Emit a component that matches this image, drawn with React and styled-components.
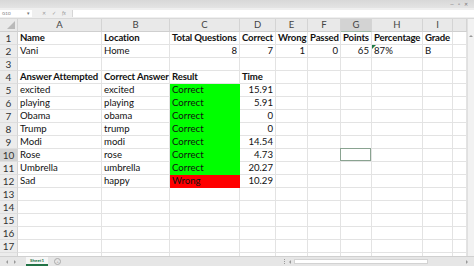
import React from "react";
import styled, { createGlobalStyle } from "styled-components";

const Global = createGlobalStyle`
  html, body { margin: 0; padding: 0; background: #fff; }
  body { font-family: Lato, "Open Sans", sans-serif; overflow: hidden; }
  #root { width: 474px; height: 266px; }
`;

const Window = styled.div`
  width: 474px;
  height: 266px;
  display: flex;
  flex-direction: column;
  overflow: hidden;
  background: #fff;
`;

const TitleBar = styled.div`
  height: 8px;
  background: linear-gradient(#d8d8d8, #e4e4e4);
  display: flex;
  justify-content: flex-end;
  align-items: center;
  gap: 4px;
  padding-right: 6px;
  font-size: 5px;
  color: #777;
  line-height: 8px;
`;

const FormulaBar = styled.div`
  height: 10px;
  background: #efefef;
  display: flex;
  align-items: center;
  padding-top: 1px;
  box-sizing: border-box;
`;

const NameBox = styled.div`
  width: 32px;
  height: 7px;
  background: #fff;
  font-size: 4.5px;
  line-height: 7px;
  color: #777;
  display: flex;
  justify-content: space-between;
  padding: 0 2px;
  box-sizing: border-box;
`;

const FxIcons = styled.div`
  display: flex;
  gap: 6px;
  padding: 0 6px 0 10px;
  font-size: 5px;
  color: #999;
  line-height: 7px;
`;

const FormulaInput = styled.div`
  flex: 1;
  height: 7px;
  background: #fff;
  border-left: 1px solid #d6d6d6;
`;

const Main = styled.div`
  flex: 1;
  display: flex;
  overflow: hidden;
  border-top: 1px solid #d8d8d8;
  box-sizing: border-box;
`;

const Grid = styled.div`
  flex: 1;
  display: grid;
  grid-template-columns: 18px 84px 68px 70px 36px 32px 33px 31px 51px 30px 14px;
  grid-template-rows: 13px;
  grid-auto-rows: 13px;
  align-content: start;
  overflow: hidden;
`;

const Corner = styled.div`
  background: #e9e9e9;
  border-right: 1px solid #d4d4d4;
  border-bottom: 1px solid #cfcfcf;
  box-sizing: border-box;
  position: relative;
  &::after {
    content: "";
    position: absolute;
    right: 2px;
    bottom: 2px;
    width: 0;
    height: 0;
    border-left: 8px solid transparent;
    border-bottom: 8px solid #b9b9b9;
  }
`;

const ColHead = styled.div`
  background: ${(p) => (p.$active ? "#d3d3d3" : "#e9e9e9")};
  border-right: 1px solid #d4d4d4;
  border-bottom: 1px solid ${(p) => (p.$active ? "#9fb8a5" : "#cfcfcf")};
  box-sizing: border-box;
  font-size: 9.5px;
  line-height: 12px;
  text-align: center;
  color: #444;
`;

const RowHead = styled.div`
  background: ${(p) => (p.$active ? "#d3d3d3" : "#ececec")};
  border-right: 1px solid #d4d4d4;
  border-bottom: 1px solid #dedede;
  box-sizing: border-box;
  font-size: 10px;
  line-height: 13px;
  text-align: center;
  color: #333;
`;

const Cell = styled.div`
  position: relative;
  background: ${(p) => p.$bg || "#fff"};
  border-right: 1px solid ${(p) => (p.$bg ? p.$bg : "#e3e3e3")};
  border-bottom: 1px solid ${(p) => (p.$bg ? p.$bg : "#e3e3e3")};
  box-sizing: border-box;
  font-size: 9.6px;
  line-height: 12px;
  font-weight: ${(p) => (p.$bold ? 700 : 400)};
  letter-spacing: ${(p) => (p.$bold ? "-0.15px" : "0")};
  text-align: ${(p) => (p.$right ? "right" : "left")};
  padding: 0 ${(p) => (p.$right ? "2px" : "1px")} 0 2px;
  white-space: nowrap;
  color: #111;
`;

const Selected = styled.div`
  position: absolute;
  inset: -1px 0 0 -1px;
  border: 1px solid #8aa391;
  pointer-events: none;
`;

const ErrorFlag = styled.div`
  position: absolute;
  left: 0;
  top: 0;
  width: 0;
  height: 0;
  border-top: 4px solid #1d7a45;
  border-right: 4px solid transparent;
`;

const VScroll = styled.div`
  width: 7px;
  background: #f2f2f2;
  border-left: 1px solid #e0e0e0;
  box-sizing: border-box;
  display: flex;
  flex-direction: column;
  align-items: center;
  padding-top: 16px;
`;

const Arrow = styled.div`
  width: 0;
  height: 0;
  border: 2px solid transparent;
  ${(p) =>
    p.$dir === "up"
      ? "border-bottom-color: #999; border-top-width: 0;"
      : p.$dir === "left"
      ? "border-right-color: #999; border-left-width: 0;"
      : "border-left-color: #999; border-right-width: 0;"}
`;

const TabBar = styled.div`
  height: 10px;
  background: #e6e6e6;
  border-top: 1px solid #d0d0d0;
  box-sizing: border-box;
  display: flex;
  align-items: center;
  font-size: 4px;
  line-height: 6px;
  color: #999;
`;

const Nav = styled.div`
  display: flex;
  align-items: center;
  gap: 6px;
  padding: 0 4px 0 6px;
`;

const Tab = styled.div`
  height: 9px;
  padding: 0 4px;
  margin-left: 6px;
  background: #f7f7f7;
  color: #217346;
  border-bottom: 2px solid #217346;
  box-sizing: border-box;
  font-size: 4.5px;
  line-height: 7px;
  font-weight: 700;
`;

const AddSheet = styled.div`
  margin-left: 6px;
  width: 5px;
  height: 5px;
  border: 1px solid #aaa;
  border-radius: 50%;
  font-size: 4px;
  line-height: 5px;
  text-align: center;
`;

const HScroll = styled.div`
  margin-left: auto;
  width: 184px;
  height: 8px;
  display: flex;
  align-items: center;
  gap: 3px;
  padding-right: 6px;
`;

const Dots = styled.div`
  width: 1px;
  height: 5px;
  border-left: 1px dotted #999;
`;

const Thumb = styled.div`
  width: 134px;
  height: 5px;
  background: #fff;
  border: 1px solid #d3d3d3;
  box-sizing: border-box;
  margin-right: auto;
`;

const cols = ["A", "B", "C", "D", "E", "F", "G", "H", "I", ""];
const GREEN = "#00ff00";
const RED = "#ff0000";

const rows = [
  [{ t: "Name", b: 1 }, { t: "Location", b: 1 }, { t: "Total Questions", b: 1 }, { t: "Correct", b: 1 }, { t: "Wrong", b: 1 }, { t: "Passed", b: 1 }, { t: "Points", b: 1 }, { t: "Percentage", b: 1 }, { t: "Grade", b: 1 }, {}],
  [{ t: "Vani" }, { t: "Home" }, { t: "8", r: 1 }, { t: "7", r: 1 }, { t: "1", r: 1 }, { t: "0", r: 1 }, { t: "65", r: 1 }, { t: "87%", flag: 1 }, { t: "B" }, {}],
  [{}, {}, {}, {}, {}, {}, {}, {}, {}, {}],
  [{ t: "Answer Attempted", b: 1 }, { t: "Correct Answer", b: 1 }, { t: "Result", b: 1 }, { t: "Time", b: 1 }, {}, {}, {}, {}, {}, {}],
  ...[
    ["excited", "excited", "Correct", "15.91"],
    ["playing", "playing", "Correct", "5.91"],
    ["Obama", "obama", "Correct", "0"],
    ["Trump", "trump", "Correct", "0"],
    ["Modi", "modi", "Correct", "14.54"],
    ["Rose", "rose", "Correct", "4.73"],
    ["Umbrella", "umbrella", "Correct", "20.27"],
    ["Sad", "happy", "Wrong", "10.29"],
  ].map(([a, b, c, d], i) => [
    { t: a },
    { t: b },
    { t: c, bg: c === "Correct" ? GREEN : RED },
    { t: d, r: 1 },
    {},
    {},
    i === 5 ? { sel: 1 } : {},
    {},
    {},
    {},
  ]),
];

while (rows.length < 18) rows.push(Array.from({ length: 10 }, () => ({})));

export default function App() {
  return (
    <Window>
      <Global />
      <TitleBar>
        <span>—</span>
        <span>▫</span>
        <span>✕</span>
      </TitleBar>
      <FormulaBar>
        <NameBox>
          <span>G10</span>
          <span>▾</span>
        </NameBox>
        <FxIcons>
          <span>✕</span>
          <span>✓</span>
          <span><i>fx</i></span>
        </FxIcons>
        <FormulaInput />
      </FormulaBar>
      <Main>
        <Grid>
          <Corner />
          {cols.map((c, i) => (
            <ColHead key={i} $active={c === "G"}>{c}</ColHead>
          ))}
          {rows.map((r, ri) => (
            <React.Fragment key={ri}>
              <RowHead $active={ri === 9}>{ri + 1}</RowHead>
              {r.map((c, ci) => (
                <Cell key={ci} $bg={c.bg} $bold={c.b} $right={c.r}>
                  {c.flag && <ErrorFlag />}
                  {c.sel && <Selected />}
                  {c.t}
                </Cell>
              ))}
            </React.Fragment>
          ))}
        </Grid>
        <VScroll>
          <Arrow $dir="up" />
        </VScroll>
      </Main>
      <TabBar>
        <Nav>
          <Arrow $dir="left" />
          <Arrow $dir="right" />
        </Nav>
        <Tab>Sheet1</Tab>
        <AddSheet>+</AddSheet>
        <HScroll>
          <Dots />
          <Arrow $dir="left" />
          <Thumb />
          <Arrow $dir="right" />
        </HScroll>
      </TabBar>
    </Window>
  );
}
